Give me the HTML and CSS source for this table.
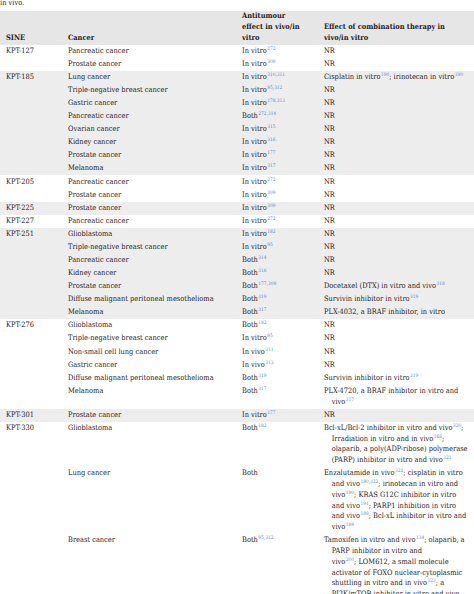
FILE: index.html
```html
<!DOCTYPE html>
<html>
<head>
<meta charset="utf-8">
<link rel="stylesheet" href="styles.css">
</head>
<body>
<p class="lead">in vivo.</p>
<table class="tbl">
<colgroup><col class="c1"><col class="c2"><col class="c3"><col class="c4"></colgroup>
<thead>
<tr><th>SINE</th><th>Cancer</th><th>Antitumour<br>effect in vivo/in<br>vitro</th><th>Effect of combination therapy in<br>vivo/in vitro</th></tr>
</thead>
<tbody>
<tr><td>KPT-127</td><td>Pancreatic cancer</td><td>In vitro<sup>272</sup></td><td>NR</td></tr>
<tr><td></td><td>Prostate cancer</td><td>In vitro<sup>309</sup></td><td>NR</td></tr>
</tbody>
<tbody class="alt">
<tr><td>KPT-185</td><td>Lung cancer</td><td>In vitro<sup>310,311</sup></td><td>Cisplatin in vitro<sup>190</sup>; irinotecan in vitro<sup>190</sup></td></tr>
<tr><td></td><td>Triple-negative breast cancer</td><td>In vitro<sup>95,312</sup></td><td>NR</td></tr>
<tr><td></td><td>Gastric cancer</td><td>In vitro<sup>178,313</sup></td><td>NR</td></tr>
<tr><td></td><td>Pancreatic cancer</td><td>Both<sup>272,314</sup></td><td>NR</td></tr>
<tr><td></td><td>Ovarian cancer</td><td>In vitro<sup>315</sup></td><td>NR</td></tr>
<tr><td></td><td>Kidney cancer</td><td>In vitro<sup>316</sup></td><td>NR</td></tr>
<tr><td></td><td>Prostate cancer</td><td>In vitro<sup>177</sup></td><td>NR</td></tr>
<tr><td></td><td>Melanoma</td><td>In vitro<sup>317</sup></td><td>NR</td></tr>
</tbody>
<tbody>
<tr><td>KPT-205</td><td>Pancreatic cancer</td><td>In vitro<sup>272</sup></td><td>NR</td></tr>
<tr><td></td><td>Prostate cancer</td><td>In vitro<sup>309</sup></td><td>NR</td></tr>
</tbody>
<tbody class="alt">
<tr><td>KPT-225</td><td>Prostate cancer</td><td>In vitro<sup>309</sup></td><td>NR</td></tr>
</tbody>
<tbody>
<tr><td>KPT-227</td><td>Pancreatic cancer</td><td>In vitro<sup>272</sup></td><td>NR</td></tr>
</tbody>
<tbody class="alt">
<tr><td>KPT-251</td><td>Glioblastoma</td><td>In vitro<sup>182</sup></td><td>NR</td></tr>
<tr><td></td><td>Triple-negative breast cancer</td><td>In vitro<sup>95</sup></td><td>NR</td></tr>
<tr><td></td><td>Pancreatic cancer</td><td>Both<sup>314</sup></td><td>NR</td></tr>
<tr><td></td><td>Kidney cancer</td><td>Both<sup>316</sup></td><td>NR</td></tr>
<tr><td></td><td>Prostate cancer</td><td>Both<sup>177,309</sup></td><td>Docetaxel (DTX) in vitro and vivo<sup>318</sup></td></tr>
<tr><td></td><td>Diffuse malignant peritoneal mesothelioma</td><td>Both<sup>319</sup></td><td>Survivin inhibitor in vitro<sup>319</sup></td></tr>
<tr><td></td><td>Melanoma</td><td>Both<sup>317</sup></td><td>PLX-4032, a BRAF inhibitor, in vitro</td></tr>
</tbody>
<tbody>
<tr><td>KPT-276</td><td>Glioblastoma</td><td>Both<sup>182</sup></td><td>NR</td></tr>
<tr><td></td><td>Triple-negative breast cancer</td><td>In vitro<sup>95</sup></td><td>NR</td></tr>
<tr><td></td><td>Non-small cell lung cancer</td><td>In vivo<sup>311</sup></td><td>NR</td></tr>
<tr><td></td><td>Gastric cancer</td><td>In vivo<sup>313</sup></td><td>NR</td></tr>
<tr><td></td><td>Diffuse malignant peritoneal mesothelioma</td><td>Both<sup>319</sup></td><td>Survivin inhibitor in vitro<sup>319</sup></td></tr>
<tr><td></td><td>Melanoma</td><td>Both<sup>317</sup></td><td class="hang">PLX-4720, a BRAF inhibitor in vitro and<br>vivo<sup>317</sup></td></tr>
</tbody>
<tbody class="alt">
<tr><td>KPT-301</td><td>Prostate cancer</td><td>In vitro<sup>177</sup></td><td>NR</td></tr>
</tbody>
<tbody>
<tr><td>KPT-330</td><td>Glioblastoma</td><td>Both<sup>182</sup></td><td class="hang">Bcl-xL/Bcl-2 inhibitor in vitro and vivo<sup>320</sup>;<br>Irradiation in vitro and in vivo<sup>166</sup>;<br>olaparib, a poly(ADP-ribose) polymerase<br>(PARP) inhibitor in vitro and vivo<sup>321</sup></td></tr>
<tr><td></td><td>Lung cancer</td><td>Both</td><td class="hang">Enzalutamide in vivo<sup>322</sup>; cisplatin in vitro<br>and vivo<sup>190,322</sup>; irinotecan in vitro and<br>vivo<sup>190</sup>; KRAS G12C inhibitor in vitro<br>and vivo<sup>191</sup>; PARP1 inhibition in vitro<br>and vivo<sup>189</sup>; Bcl-xL inhibitor in vitro and<br>vivo<sup>184</sup></td></tr>
<tr><td></td><td>Breast cancer</td><td>Both<sup>95,312</sup></td><td class="hang">Tamoxifen in vitro and vivo<sup>134</sup>; olaparib, a<br>PARP inhibitor in vitro and<br>vivo<sup>200</sup>; LOM612, a small molecule<br>activator of FOXO nuclear-cytoplasmic<br>shuttling in vitro and in vivo<sup>323</sup>; a<br>PI3K/mTOR inhibitor in vitro and vivo</td></tr>
</tbody>
</table>
</body>
</html>
```
FILE: styles.css
```css
html, body {
  margin: 0;
  padding: 0;
  background: #ffffff;
}
body {
  font-family: "DejaVu Serif Condensed", "DejaVu Serif", "Liberation Serif", serif;
  font-stretch: condensed;
  font-size: 7.4px;
  line-height: 10.8px;
  color: #1f1b1c;
  overflow: hidden;
}
.lead {
  margin: -1.6px 0 1.3px 0;
}
.tbl {
  width: 474px;
  border-collapse: collapse;
  table-layout: fixed;
}
.c1 { width: 62px; }
.c2 { width: 174px; }
.c3 { width: 82px; }
.c4 { width: 156px; }
.tbl th {
  background: #e6e6e6;
  font-weight: bold;
  text-align: left;
  vertical-align: bottom;
  padding: 0.6px 2px 1.15px 6px;
  height: 32.4px;
  box-sizing: content-box;
  white-space: nowrap;
}
.tbl td {
  vertical-align: top;
  padding: 1.15px 2px 1.15px 6px;
  white-space: nowrap;
}
.tbl td.hang {
  padding-left: 13.7px;
  text-indent: -7.7px;
}
.tbl tbody.alt td {
  background: #ededed;
}
sup {
  font-size: 4.8px;
  line-height: 0;
  vertical-align: 3px;
  color: #5b87c5;
  margin-left: 0.5px;
}
```
